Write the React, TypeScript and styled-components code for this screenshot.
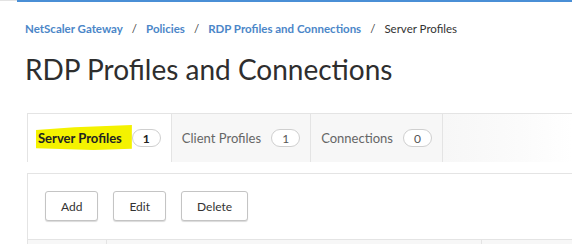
import React from "react";
import styled, { createGlobalStyle } from "styled-components";

const GlobalStyle = createGlobalStyle`
    body {
        margin: 0;
        background: #ffffff;
        font-family: Lato, "Open Sans", sans-serif;
        color: #333333;
    }
`

const TopStrip = styled.div`
    display: flex;
    height: 2px;
    & > .side {
        width: 17px;
        border-top: 1px solid #e3e3e3;
    }
    & > .accent {
        flex: 1;
        background-color: #4a8fd6;
    }
`

const Header = styled.div`
    padding: 18px 0 0 25px;
`

const Breadcrumb = styled.div`
    display: flex;
    align-items: center;
    gap: 7px;
    font-size: 11.5px;
    line-height: 18px;
    & > .link {
        color: #4b86c8;
        font-weight: bold;
    }
    & > .sep {
        color: #444;
        padding: 0 2px;
    }
    & > .current {
        color: #333;
    }
`

const Title = styled.h1`
    margin: 13px 0 0 0;
    font-size: 28px;
    font-weight: 400;
    line-height: 36px;
    color: #2e2e2e;
`

const Body = styled.div`
    padding: 26px 0 0 27px;
`

const TabBar = styled.div`
    display: flex;
    height: 48px;
    border-top: 1px solid #e4e4e4;
    border-left: 1px solid #e4e4e4;
    & > .filler {
        flex: 1;
        background: linear-gradient(90deg, #f7f7f7 0%, #fbfbfb 60%, #ffffff 100%);
    }
`

const Tab = styled.div<{ $active?: boolean }>`
    display: flex;
    align-items: center;
    gap: 10px;
    padding: 0 10px;
    border-right: 1px solid #e4e4e4;
    background-color: ${p => p.$active ? "#ffffff" : "#f7f7f7"};
    font-size: 13px;
    font-weight: ${p => p.$active ? "bold" : "normal"};
    color: ${p => p.$active ? "#222" : "#666"};
`

const Marker = styled.span`
    position: relative;
    isolation: isolate;
    &::before {
        content: "";
        position: absolute;
        left: -2px;
        right: -10px;
        top: -6px;
        bottom: -5px;
        background-color: #f4f200;
        clip-path: polygon(0 22%, 40% 12%, 100% 4%, 100% 92%, 60% 96%, 0 90%);
        z-index: -1;
    }
`

const Badge = styled.span<{ $active?: boolean }>`
    box-sizing: content-box;
    display: inline-flex;
    align-items: center;
    justify-content: center;
    width: 27px;
    height: 16px;
    border: 1px solid #cfcfcf;
    border-radius: 9px;
    background: #fff;
    font-size: 12px;
    font-weight: ${p => p.$active ? "bold" : "normal"};
    color: ${p => p.$active ? "#222" : "#555"};
`

const Panel = styled.div`
    margin-top: 11px;
    border-top: 1px solid #e4e4e4;
    border-left: 1px solid #e4e4e4;
`

const Toolbar = styled.div`
    display: flex;
    gap: 15px;
    padding: 17px 17px 18px 17px;
`

const Button = styled.button`
    height: 30px;
    padding: 0 15px;
    border: 1px solid #c4c4c4;
    border-radius: 3px;
    background: #ffffff;
    box-shadow: 0 1px 1px rgba(0, 0, 0, 0.15);
    font-family: Lato, "Open Sans", sans-serif;
    font-size: 12px;
    color: #333;
`

const TableHead = styled.div`
    display: grid;
    grid-template-columns: 79px 375px 1fr;
    height: 10px;
    border-top: 1px solid #e4e4e4;
    background-color: #f7f7f7;
    & > div:not(:last-child) {
        border-right: 1px solid #e4e4e4;
    }
`

const tabs = [
    { name: "Server Profiles", count: 1, active: true },
    { name: "Client Profiles", count: 1, active: false },
    { name: "Connections", count: 0, active: false },
]

export default function App() {
    return (
        <>
            <GlobalStyle />
            <TopStrip>
                <div className="side" />
                <div className="accent" />
            </TopStrip>
            <Header>
                <Breadcrumb>
                    <span className="link">NetScaler Gateway</span>
                    <span className="sep">/</span>
                    <span className="link">Policies</span>
                    <span className="sep">/</span>
                    <span className="link">RDP Profiles and Connections</span>
                    <span className="sep">/</span>
                    <span className="current">Server Profiles</span>
                </Breadcrumb>
                <Title>RDP Profiles and Connections</Title>
            </Header>
            <Body>
                <TabBar>
                    {tabs.map(t =>
                        <Tab key={t.name} $active={t.active}>
                            {t.active ? <Marker>{t.name}</Marker> : <span>{t.name}</span>}
                            <Badge $active={t.active}>{t.count}</Badge>
                        </Tab>
                    )}
                    <div className="filler" />
                </TabBar>
                <Panel>
                    <Toolbar>
                        <Button>Add</Button>
                        <Button>Edit</Button>
                        <Button>Delete</Button>
                    </Toolbar>
                    <TableHead>
                        <div />
                        <div />
                        <div />
                    </TableHead>
                </Panel>
            </Body>
        </>
    )
}
